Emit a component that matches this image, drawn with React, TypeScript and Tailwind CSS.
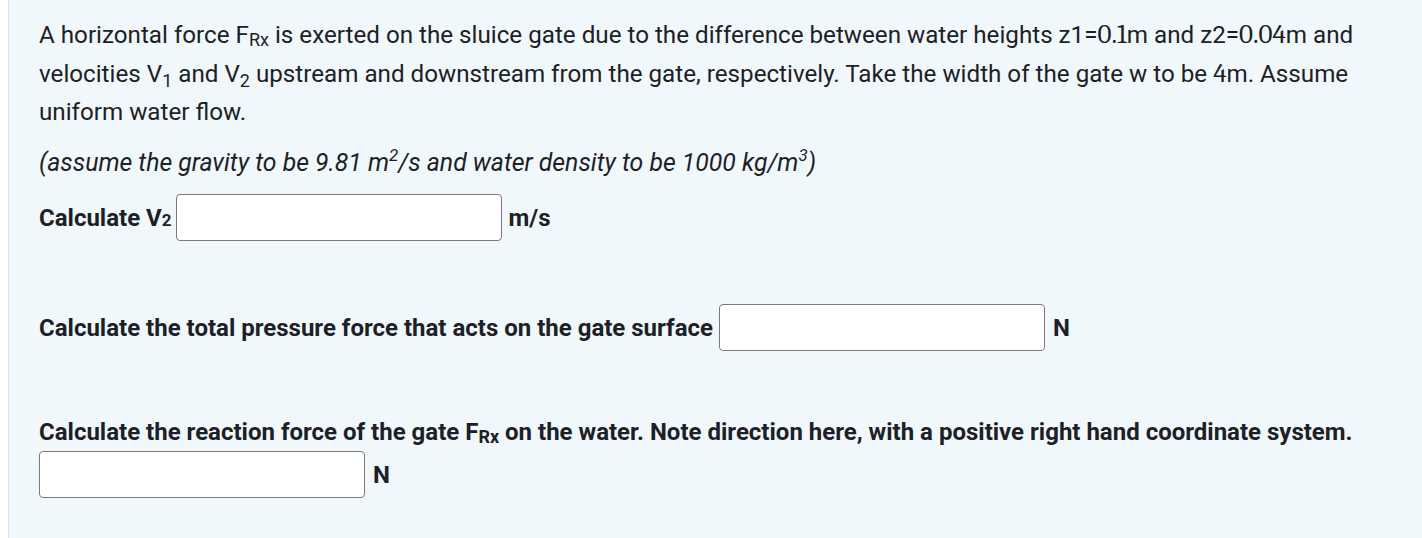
import React from 'react';

const mathNum = "font-serif text-[27px]";

function AnswerBox({ className = '' }: { className?: string }) {
  return (
    <input
      type="text"
      className={`h-[47px] w-[326px] shrink-0 rounded-[4px] border border-[#7a7a7a] bg-white px-2 outline-none ${className}`}
    />
  );
}

export default function App() {
  return (
    <div className="min-h-[538px] bg-white pl-2 font-['Roboto',sans-serif] text-[#1d2125]">
      <div className="min-h-[538px] border-l border-[#cde8f3] bg-[#f0f8fc] pl-[30px] pr-10 pt-4">
        <p className="text-[24.2px] leading-[38.5px]">
          A horizontal force F<sub className="relative top-[3px] align-baseline text-[18px]">Rx</sub> is exerted on the sluice gate due to the
          difference between water heights z1=<span className={mathNum}>0.1</span>m and z2=
          <span className={mathNum}>0.04</span>m and velocities V
          <sub className="relative top-[5px] align-baseline text-[18px]">1</sub> and V
          <sub className="relative top-[5px] align-baseline text-[18px]">2</sub> upstream and downstream from the
          gate, respectively. Take the width of the gate w to be <span className={mathNum}>4</span>m. Assume uniform
          water flow.
        </p>
        <p className="mt-3 text-[24.8px] italic leading-[38.5px]">
          (assume the gravity to be 9.81 m<sup className="relative -top-[10px] align-baseline text-[17px]">2</sup>/s
          and water density to be 1000 kg/m<sup className="relative -top-[10px] align-baseline text-[17px]">3</sup>)
        </p>

        <div className="mt-[12px] flex items-center text-[24px] font-bold">
          <span>
            Calculate V<span className="text-[17px]">2</span>
          </span>
          <AnswerBox className="ml-[4px]" />
          <span className="ml-[7px]">m/s</span>
        </div>

        <div className="mt-[63px] flex items-center text-[24px] font-bold">
          <span>Calculate the total pressure force that acts on the gate surface</span>
          <AnswerBox className="ml-[6px]" />
          <span className="ml-[8px]">N</span>
        </div>

        <div className="mt-[62px] text-[24px] font-bold leading-[38px]">
          Calculate the reaction force of the gate F
          <sub className="relative top-[3px] align-baseline text-[18px]">Rx</sub> on the water. Note direction here,
          with a positive right hand coordinate system.
        </div>
        <div className="flex items-center text-[24px] font-bold">
          <AnswerBox />
          <span className="ml-[8px]">N</span>
        </div>
      </div>
    </div>
  );
}
